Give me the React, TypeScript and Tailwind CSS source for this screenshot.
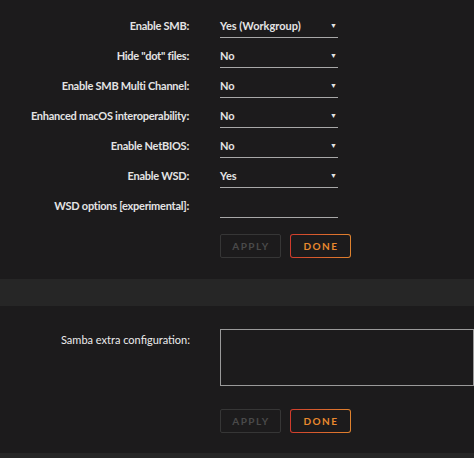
import React from 'react';

const font = { fontFamily: 'Lato, "Noto Sans", sans-serif' };

type Field = { label: string; value?: string; select: boolean };

const fields: Field[] = [
  { label: 'Enable SMB:', value: 'Yes (Workgroup)', select: true },
  { label: 'Hide "dot" files:', value: 'No', select: true },
  { label: 'Enable SMB Multi Channel:', value: 'No', select: true },
  { label: 'Enhanced macOS interoperability:', value: 'No', select: true },
  { label: 'Enable NetBIOS:', value: 'No', select: true },
  { label: 'Enable WSD:', value: 'Yes', select: true },
  { label: 'WSD options [experimental]:', select: false },
];

const Buttons: React.FC = () => (
  <div className="flex gap-[9px]">
    <button
      className="w-[61px] h-[24px] rounded-[2px] border border-[#363636] text-[10px] font-bold tracking-[1.5px] text-[#4a4a4a] pl-[1px]"
      disabled
    >
      APPLY
    </button>
    <div className="w-[61px] h-[24px] rounded-[3px] p-px bg-gradient-to-r from-[#cf3a2c] to-[#e0832e]">
      <button className="w-full h-full rounded-[2px] bg-[#1c1b1c] text-[10px] font-bold tracking-[1.5px] text-[#e8892e] pl-[1px]">
        DONE
      </button>
    </div>
  </div>
);

const App: React.FC = () => {
  return (
    <div className="min-h-screen bg-[#262626] text-[11px] font-bold text-[#e4e4e4]" style={font}>
      <section className="bg-[#1c1b1c] pt-[11px] pb-[21px]">
        <div className="grid grid-cols-[189px_1fr] gap-x-[31px]">
          {fields.map(f => (
            <React.Fragment key={f.label}>
              <div className="h-[30px] leading-[30px] text-right whitespace-nowrap tracking-[-0.25px]">{f.label}</div>
              <div className="h-[30px]">
                <div className="w-[118px] pt-[4px] h-[27px] leading-[22px] border-b-[1.5px] border-[#a8a8a8] flex justify-between">
                  <span>{f.value}</span>
                  {f.select && <span className="text-[7px] leading-[20px] pr-[1px]">▼</span>}
                </div>
              </div>
            </React.Fragment>
          ))}
          <div />
          <div className="mt-[13px]">
            <Buttons />
          </div>
        </div>
      </section>
      <div className="h-[27px]" />
      <section className="bg-[#1c1b1c] pt-[23px] pb-[20px]">
        <div className="grid grid-cols-[190px_1fr] gap-x-[30px]">
          <div className="leading-[22px] text-right whitespace-nowrap font-normal text-[#ececec]">Samba extra configuration:</div>
          <textarea className="w-[254px] h-[57px] border border-[#9a9a9a] bg-transparent resize-none outline-none" />
          <div />
          <div className="mt-[23px]">
            <Buttons />
          </div>
        </div>
      </section>
    </div>
  );
};

export default App;
